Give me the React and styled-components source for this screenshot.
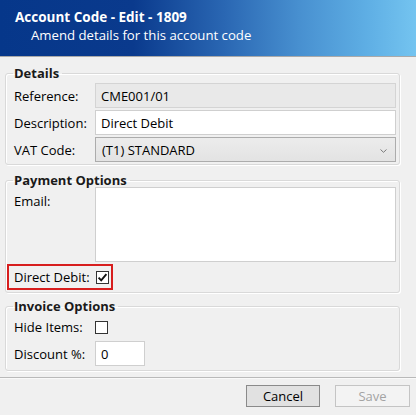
import React, { useState } from 'react';
import styled, { createGlobalStyle } from 'styled-components';

const GlobalStyle = createGlobalStyle`
  html, body {
    margin: 0;
    padding: 0;
    background: #f0f0f0;
  }
  body {
    font-family: "Segoe UI", "Open Sans", "Noto Sans", sans-serif;
    font-size: 13px;
    color: #000;
  }
  * { box-sizing: border-box; }
`;

const Dialog = styled.div`
  width: 416px;
  height: 415px;
  background: #f0f0f0;
  display: flex;
  flex-direction: column;
  overflow: hidden;
`;

// Header banner
const Banner = styled.div`
  height: 57px;
  flex: none;
  background: linear-gradient(to right, #06378a 0%, #0a3a8d 32%, #2a67b3 54%, #4890d0 72%, #5eaee4 88%, #74c4f0 100%);
  border-bottom: 1px solid #a9a9a9;
  padding: 8px 0 0 15px;
  color: #fff;
`;

const Title = styled.div`
  font-weight: 700;
  font-size: 13.5px;
  line-height: 18px;
`;

const Subtitle = styled.div`
  font-size: 13.2px;
  line-height: 18px;
  margin-left: 16px;
`;

const Body = styled.div`
  flex: 1;
  display: flex;
  flex-direction: column;
  padding: 9px 16px 0 5px;
`;

const Group = styled.fieldset`
  margin: ${(p) => p.$top || 0}px 0 0 0;
  padding: ${(p) => p.$pt || 0}px 3px ${(p) => p.$pb || 2}px 8px;
  border: 1px solid #d9d9d9;
  border-radius: 3px;
  box-shadow: inset 1px 1px 0 #ffffff, 1px 1px 0 #ffffff;
  display: flex;
  flex-direction: column;
  gap: 2px;
  min-width: 0;
`;

const Legend = styled.legend`
  font-weight: 700;
  font-size: 13px;
  line-height: 14px;
  padding: 0 3px 0 1px;
  margin-left: -1px;
  color: #1a1a1a;
`;

const Row = styled.div`
  display: grid;
  grid-template-columns: 81px 1fr;
  align-items: ${(p) => (p.$top ? 'start' : 'center')};
  min-height: ${(p) => p.$h || 25}px;
`;

const Label = styled.label`
  line-height: 18px;
  padding-top: ${(p) => p.$pt || 0}px;
  white-space: nowrap;
`;

const TextBox = styled.div`
  height: ${(p) => p.$h || 25}px;
  width: ${(p) => (p.$w ? `${p.$w}px` : '100%')};
  background: ${(p) => (p.$readOnly ? '#e9e9e9' : '#ffffff')};
  border: 1px solid ${(p) => (p.$readOnly ? '#d4d4d4' : '#cfcfcf')};
  padding: 0 5px;
  display: flex;
  align-items: center;
  line-height: 18px;
`;

const Select = styled.div`
  height: 25px;
  background: linear-gradient(#ececec, #e3e3e3);
  border: 1px solid #acacac;
  padding: 0 8px 0 6px;
  display: flex;
  align-items: center;
  justify-content: space-between;
  line-height: 18px;
`;

const Chevron = styled.svg`
  width: 7px;
  height: 4px;
  margin-top: 2px;
`;

const Highlight = styled.div`
  display: grid;
  grid-template-columns: 82px 13px;
  align-items: center;
  width: 106px;
  height: 26px;
  margin-left: -7px;
  padding-left: 5px;
  border: 2px solid #d71e1e;
`;

const Check = styled.div`
  width: 13px;
  height: 13px;
  border: 1px solid #333;
  background: #fff;
  display: flex;
  align-items: center;
  justify-content: center;
  cursor: pointer;
`;

const Footer = styled.div`
  margin-top: 6px;
  border-top: 1px solid #b9b9b9;
  box-shadow: inset 0 1px 0 #f9f9f9;
  display: flex;
  justify-content: flex-end;
  gap: 15px;
  padding: 7px 6px 0 0;
`;

const Button = styled.button`
  width: ${(p) => p.$w}px;
  height: 22px;
  font-family: inherit;
  font-size: 13px;
  border: 1px solid ${(p) => (p.disabled ? '#c4c4c4' : '#8a8a8a')};
  background: ${(p) => (p.disabled ? '#f3f3f3' : '#e1e1e1')};
  color: ${(p) => (p.disabled ? '#a3a3a3' : '#000')};
  padding: 0;
  border-radius: 0;
`;

const CheckBox = ({ checked, onToggle }) => (
  <Check onClick={onToggle}>
    {checked && (
      <svg width="11" height="11" viewBox="0 0 11 11">
        <path d="M1.6 5.6 L4.2 8.3 L9.4 2.2" fill="none" stroke="#111" strokeWidth="1.9" />
      </svg>
    )}
  </Check>
);

export default function App() {
  const [directDebit, setDirectDebit] = useState(true);
  const [hideItems, setHideItems] = useState(false);

  return (
    <Dialog>
      <GlobalStyle />
      <Banner>
        <Title>Account Code - Edit - 1809</Title>
        <Subtitle>Amend details for this account code</Subtitle>
      </Banner>

      <Body>
        <Group $pt={3} $pb={2}>
          <Legend>Details</Legend>
          <Row>
            <Label>Reference:</Label>
            <TextBox $readOnly>CME001/01</TextBox>
          </Row>
          <Row>
            <Label>Description:</Label>
            <TextBox>Direct Debit</TextBox>
          </Row>
          <Row>
            <Label>VAT Code:</Label>
            <Select>
              <span>(T1) STANDARD</span>
              <Chevron viewBox="0 0 7 4">
                <path d="M0.5 0.5 L3.5 3.3 L6.5 0.5" fill="none" stroke="#7a7a7a" strokeWidth="1" />
              </Chevron>
            </Select>
          </Row>
        </Group>

        <Group $top={8} $pt={0} $pb={2}>
          <Legend>Payment Options</Legend>
          <Row $top>
            <Label $pt={5}>Email:</Label>
            <TextBox $h={75} />
          </Row>
          <Highlight>
            <Label>Direct Debit:</Label>
            <CheckBox checked={directDebit} onToggle={() => setDirectDebit(!directDebit)} />
          </Highlight>
        </Group>

        <Group $top={6} $pt={2} $pb={4}>
          <Legend>Invoice Options</Legend>
          <Row $h={24}>
            <Label>Hide Items:</Label>
            <CheckBox checked={hideItems} onToggle={() => setHideItems(!hideItems)} />
          </Row>
          <Row>
            <Label>Discount %:</Label>
            <TextBox $w={50}>0</TextBox>
          </Row>
        </Group>
      </Body>

      <Footer>
        <Button $w={74}>Cancel</Button>
        <Button $w={75} disabled>Save</Button>
      </Footer>
      <div style={{ flex: 1 }} />
    </Dialog>
  );
}
